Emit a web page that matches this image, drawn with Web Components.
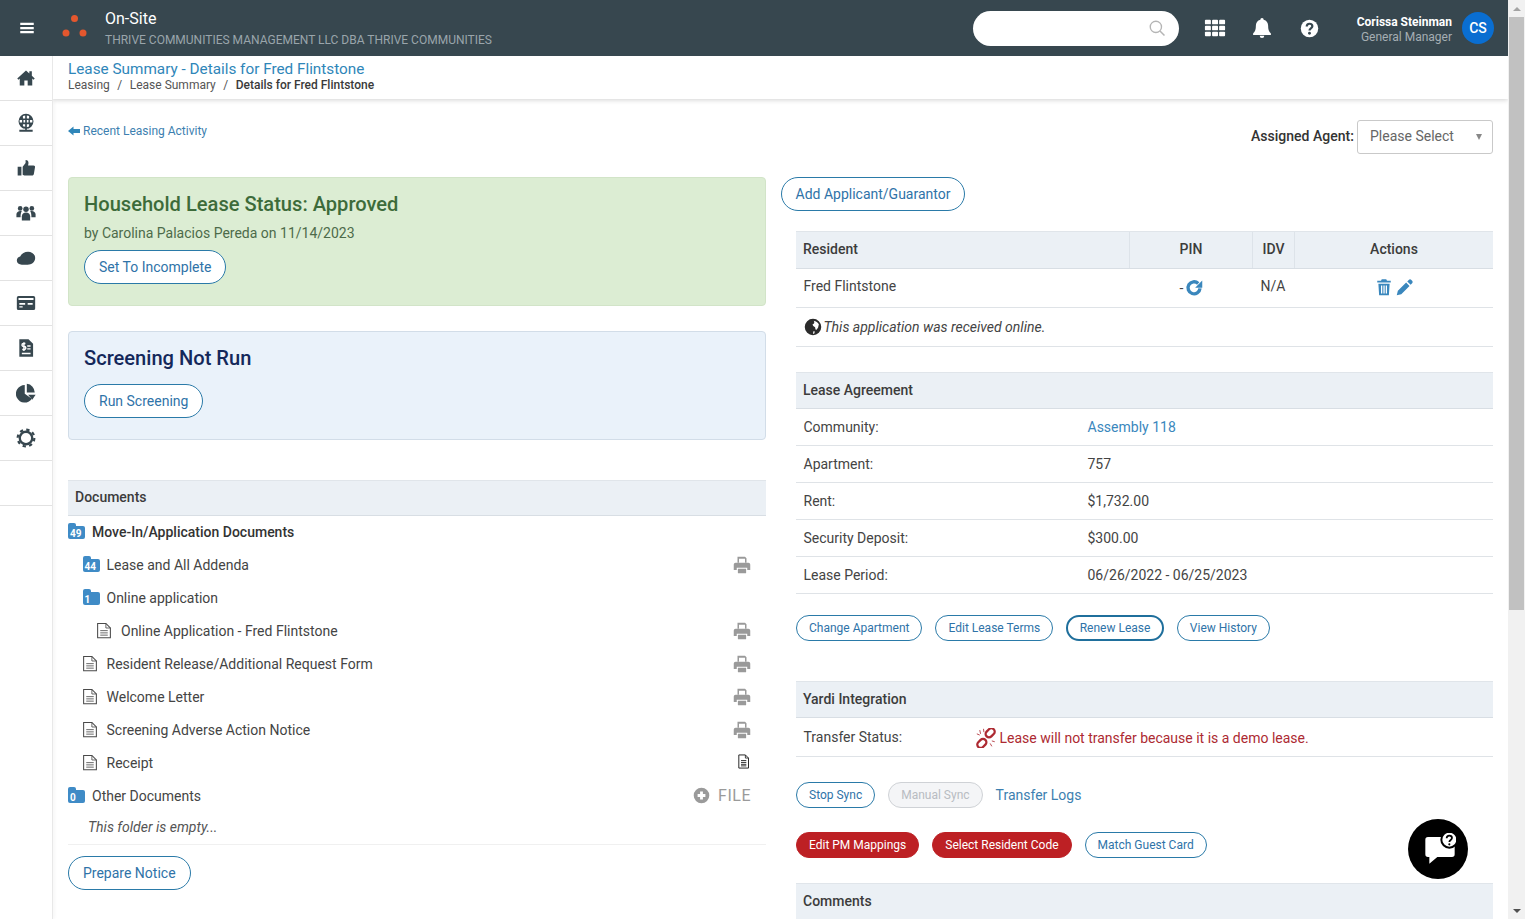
<!DOCTYPE html>
<html>
<head>
<meta charset="utf-8">
<title>Lease Summary</title>
<style>
html, body { margin: 0; height: 919px; overflow: hidden; background: #fff; }
body { font-family: Roboto, "Liberation Sans", sans-serif; font-size: 14px; color: #3c3c3c; }
</style>
</head>
<body>
<lease-app></lease-app>

<script>
var ICONS = {
  bars: '<path d="M3 5h18v3H3zM3 10.500h18v3H3zM3 16h18v3H3z"/>',
  home: '<path d="M12 3 1.500 12.500 3 14l1.500-1.300V21H10v-6h4v6h5.500v-8.300L21 14l1.500-1.500L19 9.300V4h-3v2.600z"/>',
  network: '<path fill-rule="evenodd" d="M12 1a9 9 0 1 0 0 18 9 9 0 0 0 0-18zM11 3v3.500H8.300V3.700zM13 3l2.700.7v2.800H13zM4.400 8.500h2.900v3H4.400zM9 8.500h2v3H9zM13 8.500h2v3h-2zM16.700 8.500h2.900v3h-2.900zM8.300 13.500H11v3l-2.700-.7zM13 13.500h2.700v2.800l-2.700.7z"/><path d="M11 18h2v2h7v2.500H4V20h7z"/>',
  thumb: '<path d="M2 10.500h4.500V21H2zM8 10.500 11.500 6V2.500c2.500 0 3.500 1.500 3.500 3.500l-.5 3H21c1.500 0 2 1 1.800 2.200l-1.300 7.600c-.2 1.300-1 2.200-2.300 2.200H11c-1.500 0-2-1-3-1z"/>',
  users: '<circle cx="12" cy="7.500" r="3.300"/><path d="M7 21v-5c0-2.800 2.200-4.500 5-4.500s5 1.700 5 4.500v5z"/><circle cx="5" cy="6.500" r="2.800"/><path d="M.5 17v-3.500c0-2.500 2.300-4 4.500-4 .9 0 1.500.1 2 .4-1.200 1.500-1.500 3.800-1.500 7.100z"/><circle cx="19" cy="6.500" r="2.800"/><path d="M23.500 17v-3.500c0-2.500-2.300-4-4.500-4-.9 0-1.500.1-2 .4 1.200 1.500 1.500 3.800 1.500 7.100z"/>',
  cloud: '<path d="M7 20c-3.500 0-6-2-6-5 0-2.500 1.800-4.300 4-4.800C6.500 7 10 4.500 14.500 4.500c4.500 0 8.500 3 8.500 7.500 0 5-4.500 8-9 8z"/>',
  card: '<path fill-rule="evenodd" d="M3 3.500h18a2 2 0 0 1 2 2v13a2 2 0 0 1-2 2H3a2 2 0 0 1-2-2v-13a2 2 0 0 1 2-2zM3 6v2.500h18V6zM4 12v2h7v-2zM14 12v2h6v-2zM4 16v1.500h4V16z"/>',
  invoice: '<path d="M4 1.500h11l5.500 5.500v15.500H4z"/><g fill="none" stroke="#fff" stroke-width="1.700"><path d="M11.300 6.500H9a1.700 1.700 0 0 0 0 3.600h1a1.700 1.700 0 0 1 0 3.600H7.500M9.500 5v10.500M13.500 9.500h4M13.500 13h4M7 18.500h10.500"/></g>',
  pie: '<path d="M10.500 2.500a10.500 10.500 0 1 0 8.500 16.500l-8.500-6z"/><path d="M13 1a10.500 10.500 0 0 1 9.500 10.500H13z"/><path d="M14.500 14h9l-4 6z"/>',
  gear: '<circle cx="12" cy="12" r="7.500" fill="none" stroke="currentColor" stroke-width="2.800"/><circle cx="12" cy="12" r="10" fill="none" stroke="currentColor" stroke-width="2.600" stroke-dasharray="4 3.850"/>',
  search: '<circle cx="10.500" cy="10.500" r="7.500" fill="none" stroke="currentColor" stroke-width="1.800"/><path d="m16 16 6 6" stroke="currentColor" stroke-width="2" fill="none"/>',
  grid: '<rect x="1" y="3" width="6.500" height="5" rx="1"/><rect x="8.800" y="3" width="6.500" height="5" rx="1"/><rect x="16.500" y="3" width="6.500" height="5" rx="1"/><rect x="1" y="9.500" width="6.500" height="5" rx="1"/><rect x="8.800" y="9.500" width="6.500" height="5" rx="1"/><rect x="16.500" y="9.500" width="6.500" height="5" rx="1"/><rect x="1" y="16" width="6.500" height="5" rx="1"/><rect x="8.800" y="16" width="6.500" height="5" rx="1"/><rect x="16.500" y="16" width="6.500" height="5" rx="1"/>',
  bell: '<path d="M12 1a1.800 1.800 0 0 0-1.800 1.900C7 3.700 5.300 6.300 5.300 9.500c0 5-1.300 6.500-3 8.500v1.500h19.400V18c-1.700-2-3-3.500-3-8.500 0-3.200-1.700-5.800-4.900-6.600A1.800 1.800 0 0 0 12 1zM9.500 20.500a2.500 2.500 0 0 0 5 0z"/>',
  help: '<circle cx="12" cy="12" r="11"/><path d="M8.500 9.500C8.500 7.300 10 6 12 6s3.600 1.200 3.600 3.200c0 2.700-3.600 2.700-3.600 5.300" fill="none" stroke="#37474f" stroke-width="2.800"/><circle cx="12" cy="18" r="1.800" fill="#37474f"/>',
  arrow: '<path d="M11 3v5h13v8H11v5L0 12z"/>',
  print: '<path d="M6 1h10l2 2v6h-2V3.500H8V9H6z"/><path fill-rule="evenodd" d="M3.500 9h17c1.400 0 2.500 1.100 2.500 2.500v7h-4v-3H5v3H1v-7C1 10.100 2.100 9 3.500 9z"/><path d="M6.500 17h11v6h-11z"/>',
  doc: '<path d="M3.500 2h11L20.500 8v13h-17z" fill="#fff" stroke="currentColor" stroke-width="1.400"/><path d="M14.500 2v6h6M7 11.500h10M7 14.500h10M7 17.500h10" fill="none" stroke="currentColor" stroke-width="1.100"/>',
  docdark: '<path d="M4.500 1.500h10.500l5 5V22.500H4.500z" fill="#fff" stroke="currentColor" stroke-width="1.600"/><path d="M15 1.500v5h5" fill="none" stroke="currentColor" stroke-width="1.400"/><path d="M8 10.500h8.500M8 13.500h8.500M8 16.500h8.500M8 19h8.500" fill="none" stroke="currentColor" stroke-width="1.500"/>',
  plus: '<path fill-rule="evenodd" d="M12 1a11 11 0 1 0 0 22 11 11 0 0 0 0-22zM10 6.500h4V10h3.500v4H14v3.500h-4V14H6.500v-4H10z"/>',
  refresh: '<path d="M20 12.500a8 8 0 1 1-2.400-6.500" fill="none" stroke="currentColor" stroke-width="4.500"/><path d="M23 2v9.500h-9.500z"/>',
  trash: '<path d="M9 1.500h6l1 2h5V6H3V3.500h5z"/><path fill-rule="evenodd" d="M4.500 7.500h15L18.500 23h-13zM8 10v10.500h1.700V10zM11.200 10v10.500h1.700V10zM14.300 10v10.500H16V10z"/>',
  pencil: '<path d="M17 2.500a2.500 2.500 0 0 1 3.500 0l1 1a2.500 2.500 0 0 1 0 3.500L19.500 9 15 4.500zM13.500 6 18 10.500 7 21.500 1 23l1.500-6z"/>',
  earth: '<path fill-rule="evenodd" d="M12 1a11 11 0 1 0 0 22 11 11 0 0 0 0-22zM13 3.500c3 .3 5.500 2.200 6.800 4.800l-1 4.500-2 3-1.500-.5-.5-3-2.500-1.500-1-2.300 2-1.200.5-2zM12.500 17.500l2 .5-1 3h-1.500z"/>',
  unlink: '<g fill="none" stroke="currentColor" stroke-width="2.800"><rect x="11" y="1.800" width="12" height="8" rx="4" transform="rotate(-45 17 5.800)"/><rect x="1" y="14.500" width="12" height="8" rx="4" transform="rotate(-45 7 18.500)"/></g><path d="M4.500 2.500 5.500 7M1 7l3.500 1.500M9 1l.5 4M19 15.500l3.500 1M17 18.500 19 22" stroke="currentColor" stroke-width="1" fill="none"/>',
  chat: '<path d="M3 5h18a2 2 0 0 1 2 2v11a2 2 0 0 1-2 2H10l-6 5v-5H3a2 2 0 0 1-2-2V7a2 2 0 0 1 2-2z" transform="translate(0 -2)"/><circle cx="19" cy="5" r="6" stroke="#000" stroke-width="1.500"/><path d="M17 4c0-1.200.9-2 2-2s2 .8 2 1.800c0 1.400-2 1.500-2 3" fill="none" stroke="#000" stroke-width="1.300"/><circle cx="19" cy="8.500" r=".8" fill="#000"/>'
};

class UiIcon extends HTMLElement
{
    connectedCallback()
    {
        var size = this.getAttribute("size") || 16;
        this.attachShadow({mode:"open"});
        this.shadowRoot.innerHTML = `
            <style>
                :host { display: inline-flex; line-height: 0; flex: none; }
                svg { fill: currentColor; }
            </style>
            <svg width="${size}" height="${size}" viewBox="0 0 24 24">${ICONS[this.getAttribute("name")]}</svg>`;
    }
}
customElements.define("ui-icon", UiIcon);

class PillButton extends HTMLElement
{
    connectedCallback()
    {
        this.attachShadow({mode:"open"});
        this.shadowRoot.innerHTML = `
            <style>
                :host
                {
                    display: inline-flex;
                    align-items: center;
                    box-sizing: border-box;
                    height: 34px;
                    padding: 0 14px;
                    font-size: 14px;
                    background: #fff;
                    color: #2f73a8;
                    border: 1px solid #2a7aa8;
                    border-radius: 17px;
                    white-space: nowrap;
                }
                :host([small]) { height: 26px; padding: 0 12px; font-size: 12px; border-radius: 13px; }
                :host([focus]) { border: 2px solid #1f6f9c; padding: 0 11.500px; }
                :host([danger]) { background: #bd2024; border-color: #bd2024; color: #fff; }
                :host([disabled]) { background: #f4f5f7; border: 1.500px solid #cfd2d6; color: #b8bcc2; }
            </style>
            <slot></slot>`;
    }
}
customElements.define("pill-button", PillButton);

class AlertBox extends HTMLElement
{
    connectedCallback()
    {
        this.attachShadow({mode:"open"});
        this.shadowRoot.innerHTML = `
            <style>
                :host
                {
                    display: block;
                    box-sizing: border-box;
                    padding: 14px 15px;
                    border-radius: 4px;
                    border: 1px solid #d2e4c8;
                    background: #dcedd3;
                    color: #3d6b3a;
                }
                :host([kind="info"]) { background: #eaf2fa; border-color: #d2dde8; color: #14285a; }
                h3 { margin: 0; font-size: 20.100px; line-height: 24px; font-weight: 500; }
                ::slotted(p) { margin: 7px 0 7px; line-height: 20px; font-size: 14px; color: #4d6b4a; }
            </style>
            <h3>${this.getAttribute("heading")}</h3>
            <slot></slot>`;
    }
}
customElements.define("alert-box", AlertBox);

class SectionHead extends HTMLElement
{
    connectedCallback()
    {
        this.attachShadow({mode:"open"});
        this.shadowRoot.innerHTML = `
            <style>
                :host
                {
                    display: flex;
                    align-items: center;
                    box-sizing: border-box;
                    height: 37px;
                    padding: 0 7px 2px 7px;
                    background: #ebf0f5;
                    border-top: 1px solid #e0e5ea;
                    border-bottom: 1px solid #d8dee4;
                    font-weight: 500;
                    color: #3c3c3c;
                }
            </style>
            <slot></slot>`;
    }
}
customElements.define("section-head", SectionHead);

class KvRow extends HTMLElement
{
    connectedCallback()
    {
        var col = this.getAttribute("col") || 284;
        this.attachShadow({mode:"open"});
        this.shadowRoot.innerHTML = `
            <style>
                :host
                {
                    display: grid;
                    grid-template-columns: ${col}px 1fr;
                    align-items: center;
                    height: 37px;
                    padding-left: 7.500px;
                    border-bottom: 1px solid #dfe3e7;
                    box-sizing: border-box;
                    color: #444;
                }
                :host([lift]) span:first-child { padding-bottom: 5px; }
            </style>
            <span>${this.getAttribute("label")}</span>
            <span><slot></slot></span>`;
    }
}
customElements.define("kv-row", KvRow);

class ResidentTable extends HTMLElement
{
    connectedCallback()
    {
        this.attachShadow({mode:"open"});
        this.shadowRoot.innerHTML = `
            <style>
                :host { display: block; color: #444; }
                .row { display: grid; grid-template-columns: 334px 123px 42px 198px; box-sizing: border-box; }
                .head { height: 38px; padding-bottom: 0; background: #ebf0f5; border-top: 1px solid #e0e5ea; border-bottom: 1px solid #d8dee4; font-weight: 500; color: #3c3c3c; }
                .head > div { display: flex; align-items: center; justify-content: center; border-right: 1px solid #dde3e9; padding-bottom: 2px; }
                .head > div:first-child { justify-content: flex-start; padding-left: 7px; }
                .head > div:last-child { border-right: none; }
                .body { height: 39px; border-bottom: 1px solid #dfe3e7; }
                .body > div { display: flex; align-items: center; justify-content: center; gap: 2px; }
                .body > div:first-child { justify-content: flex-start; padding-left: 7.500px; padding-bottom: 5px; }
                .link { color: #3a87bd; }
                .note { display: flex; align-items: center; gap: 2px; height: 39px; padding-left: 7.500px; border-bottom: 1px solid #dfe3e7; font-style: italic; box-sizing: border-box; }
            </style>
            <div class="row head"><div>Resident</div><div>PIN</div><div>IDV</div><div>Actions</div></div>
            <div class="row body">
                <div>Fred Flintstone</div>
                <div>-<ui-icon class="link" name="refresh" size="18"></ui-icon></div>
                <div style="padding-bottom:5px;padding-right:2px">N/A</div>
                <div style="gap:3px;padding-bottom:2px"><ui-icon class="link" name="trash" size="18"></ui-icon><ui-icon class="link" name="pencil" size="18"></ui-icon></div>
            </div>
            <div class="note"><ui-icon name="earth" size="18" style="color:#2b2b2b"></ui-icon>This application was received online.</div>`;
    }
}
customElements.define("resident-table", ResidentTable);

class DocRow extends HTMLElement
{
    connectedCallback()
    {
        var level = +this.getAttribute("level") || 0;
        var count = this.getAttribute("folder");
        var left = count !== null
            ? `<span class="folder"><span class="tab"></span><span class="num">${count}</span></span>`
            : `<ui-icon name="doc" size="18" style="color:#4a4a4a;margin:0 1px 0 -2px"></ui-icon>`;
        var right = "";
        if (this.hasAttribute("print")) right = `<ui-icon name="print" size="18" style="color:#9a9a9a"></ui-icon>`;
        if (this.hasAttribute("viewdoc")) right = `<ui-icon name="docdark" size="15" style="color:#2b2b2b;margin:-3px 0 0 0"></ui-icon>`;
        this.attachShadow({mode:"open"});
        this.shadowRoot.innerHTML = `
            <style>
                :host
                {
                    display: flex;
                    align-items: center;
                    height: 33px;
                    padding-left: ${level * 14.500}px;
                    padding-right: 15px;
                    color: #444;
                }
                :host([strong]) { font-weight: 500; color: #333; }
                .folder
                {
                    position: relative;
                    flex: none;
                    width: 17px;
                    height: 13px;
                    margin-top: 2px;
                    background: #3f8bc6;
                    border-radius: 1px 2px 2px 2px;
                    color: #fff;
                    font-size: 10px;
                    font-weight: 700;
                }
                .tab { position: absolute; left: 0; top: -3px; width: 8px; height: 4px; background: #3f8bc6; border-radius: 2px 2px 0 0; }
                .num { position: absolute; left: 2px; top: 3px; line-height: 10px; }
                .label { margin-left: 7px; flex: 1; }
            </style>
            ${left}
            <span class="label"><slot></slot></span>
            ${right}<slot name="action"></slot>`;
    }
}
customElements.define("doc-row", DocRow);

class AppTopbar extends HTMLElement
{
    connectedCallback()
    {
        this.attachShadow({mode:"open"});
        this.shadowRoot.innerHTML = `
            <style>
                :host
                {
                    display: flex;
                    align-items: center;
                    height: 56px;
                    background: #37474f;
                    color: #fff;
                    flex: none;
                }
                .burger { width: 53px; display: flex; justify-content: center; }
                .logo { margin-left: 7px; width: 30px; line-height: 0; }
                .brand { margin-left: 15px; flex: 1; }
                .brand b { display: block; font-weight: 400; font-size: 16px; line-height: 20px; margin-bottom: 3px; margin-top: 1px; }
                .brand span { display: block; font-size: 12px; line-height: 16px; color: #9aa5ab; }
                .search
                {
                    display: flex; align-items: center; justify-content: flex-end;
                    box-sizing: border-box;
                    width: 206px; height: 35px; margin-right: 25px; padding-right: 13px;
                    background: #fff; border-radius: 18px; color: #b5b5b5;
                }
                .tools { display: flex; align-items: center; gap: 25px; }
                .tools .help { margin-left: 2px; }
                .user { margin-left: 38px; padding-top: 4px; text-align: right; font-size: 12px; line-height: 15px; }
                .user b { display: block; font-weight: 700; }
                .user span { color: #a5aeb3; }
                .avatar
                {
                    display: flex; align-items: center; justify-content: center;
                    width: 32px; height: 32px; margin: 0 14px 0 10px;
                    background: #0a6ed1; border-radius: 50%;
                    font-size: 14px; font-weight: 500;
                }
            </style>
            <div class="burger"><ui-icon name="bars" size="18"></ui-icon></div>
            <div class="logo">
                <svg width="30" height="30" viewBox="0 0 30 30" fill="#e4572e">
                    <circle cx="14.500" cy="5.500" r="3.500"/><circle cx="6" cy="20" r="3.500"/><circle cx="23" cy="20" r="3.500"/>
                </svg>
            </div>
            <div class="brand"><b>On-Site</b><span>THRIVE COMMUNITIES MANAGEMENT LLC DBA THRIVE COMMUNITIES</span></div>
            <div class="search"><ui-icon name="search" size="18"></ui-icon></div>
            <div class="tools">
                <ui-icon name="grid" size="22"></ui-icon>
                <ui-icon name="bell" size="22"></ui-icon>
                <ui-icon class="help" name="help" size="19"></ui-icon>
            </div>
            <div class="user"><b>Corissa Steinman</b><span>General Manager</span></div>
            <div class="avatar">CS</div>`;
    }
}
customElements.define("app-topbar", AppTopbar);

class AppSidebar extends HTMLElement
{
    connectedCallback()
    {
        var names = ["home","network","thumb","users","cloud","card","invoice","pie","gear",""];
        this.attachShadow({mode:"open"});
        this.shadowRoot.innerHTML = `
            <style>
                :host
                {
                    display: block;
                    width: 53px;
                    flex: none;
                    box-sizing: border-box;
                    background: #fff;
                    border-right: 1px solid #e8e8e8;
                    box-shadow: 2px 0 3px rgba(0,0,0,.03);
                    color: #37474f;
                }
                div
                {
                    display: flex; align-items: center; justify-content: center;
                    box-sizing: border-box;
                    height: 45px;
                    padding-bottom: 1px;
                    border-bottom: 1px solid #e2e2e2;
                }
            </style>
            ${names.map(n => `<div>${n ? `<ui-icon name="${n}" size="20"></ui-icon>` : ""}</div>`).join("")}`;
    }
}
customElements.define("app-sidebar", AppSidebar);

class PageHeader extends HTMLElement
{
    connectedCallback()
    {
        this.attachShadow({mode:"open"});
        this.shadowRoot.innerHTML = `
            <style>
                :host
                {
                    display: block;
                    box-sizing: border-box;
                    height: 43px;
                    padding: 5px 16px 0 15px;
                    background: #fff;
                    box-shadow: 0 1px 5px rgba(0,0,0,.18);
                    position: relative;
                }
                h1 { margin: -1px 0 1px; font-size: 15.300px; font-weight: 400; line-height: 18px; color: #2f86b9; }
                nav { font-size: 12px; line-height: 13px; color: #555; }
                i { font-style: normal; margin: 0 4.500px; }
                b { font-weight: 500; color: #3a3a3a; }
            </style>
            <h1>Lease Summary - Details for Fred Flintstone</h1>
            <nav>Leasing <i>/</i> Lease Summary <i>/</i> <b>Details for Fred Flintstone</b></nav>`;
    }
}
customElements.define("page-header", PageHeader);

class AppScrollbar extends HTMLElement
{
    connectedCallback()
    {
        this.attachShadow({mode:"open"});
        this.shadowRoot.innerHTML = `
            <style>
                :host { display: flex; flex-direction: column; width: 17px; flex: none; background: #f1f1f1; }
                .btn { height: 17px; display: flex; align-items: center; justify-content: center; }
                .up { width: 0; height: 0; border: 4px solid transparent; border-top: 0; border-bottom: 4px solid #a3a3a3; }
                .down { width: 0; height: 0; border: 4px solid transparent; border-bottom: 0; border-top: 4px solid #505050; }
                .track { flex: 1; padding: 0 1px; }
                .thumb { height: 593px; background: #c1c1c1; }
            </style>
            <div class="btn"><div class="up"></div></div>
            <div class="track"><div class="thumb"></div></div>
            <div class="btn"><div class="down"></div></div>`;
    }
}
customElements.define("app-scrollbar", AppScrollbar);

class LeaseApp extends HTMLElement
{
    connectedCallback()
    {
        this.attachShadow({mode:"open"});
        this.shadowRoot.innerHTML = `
            <style>
                :host { display: flex; height: 919px; overflow: hidden; position: relative; }
                .app { flex: 1; min-width: 0; display: flex; flex-direction: column; }
                .under { flex: 1; display: flex; min-height: 0; }
                .main { flex: 1; min-width: 0; overflow: hidden; }
                .content { padding: 21px 15px 0 15px; }
                .toolbar { display: flex; justify-content: space-between; align-items: center; height: 34px; margin-bottom: 23px; }
                .back { display: flex; align-items: center; gap: 3px; font-size: 12px; color: #3d7fb0; margin-top: -13px; }
                .back ui-icon { color: #2f86b9; }
                .agent { display: flex; align-items: center; gap: 3px; font-weight: 500; color: #333; }
                .select
                {
                    display: flex; align-items: center; justify-content: space-between;
                    box-sizing: border-box;
                    width: 136px; height: 34px; padding: 0 10px 2px 12px;
                    border: 1px solid #c9c9c9; border-radius: 3px;
                    font-weight: 400; color: #666;
                }
                .agent > span { padding-bottom: 2px; letter-spacing: .02px; }
                .caret { width: 0; height: 0; border: 3.500px solid transparent; border-bottom: 0; border-top: 6px solid #888; margin-top: 2px; }
                .cols { display: grid; grid-template-columns: 698px 712px; column-gap: 15px; }
                .green { height: 129px; margin-bottom: 25px; }
                .blue { height: 109px; margin-bottom: 40px; }
                .blue pill-button { margin-top: 14px; }
                .docs { height: 36px; margin-bottom: -1px; }
                .file { display: flex; align-items: center; gap: 8px; font-size: 16px; color: #9a9a9a; letter-spacing: .5px; }
                .empty { height: 33px; line-height: 30px; padding-left: 20px; font-style: italic; color: #555; border-bottom: 1px solid #f0f0f0; margin-bottom: 11px; box-sizing: border-box; }
                .right > .tables { margin: 20px 0 0 15px; }
                .gap { height: 25px; }
                .btns { display: flex; gap: 13px; align-items: center; }
                .add { padding: 0 13.500px; }
                .link { color: #3a87bd; }
                .red { display: flex; align-items: center; gap: 4px; color: #ad2a32; padding-top: 2px; }
            </style>
            <div class="app">
                <app-topbar></app-topbar>
                <div class="under">
                    <app-sidebar></app-sidebar>
                    <div class="main">
                        <page-header></page-header>
                        <div class="content">
                            <div class="toolbar">
                                <div class="back"><ui-icon name="arrow" size="12"></ui-icon>Recent Leasing Activity</div>
                                <div class="agent"><span>Assigned Agent:</span>
                                    <div class="select">Please Select<span class="caret"></span></div>
                                </div>
                            </div>
                            <div class="cols">
                                <div class="left">
                                    <alert-box class="green" heading="Household Lease Status: Approved">
                                        <p>by Carolina Palacios Pereda on 11/14/2023</p>
                                        <pill-button>Set To Incomplete</pill-button>
                                    </alert-box>
                                    <alert-box class="blue" kind="info" heading="Screening Not Run">
                                        <pill-button>Run Screening</pill-button>
                                    </alert-box>
                                    <section-head class="docs">Documents</section-head>
                                    <doc-row strong folder="49">Move-In/Application Documents</doc-row>
                                    <doc-row level="1" folder="44" print>Lease and All Addenda</doc-row>
                                    <doc-row level="1" folder="1">Online application</doc-row>
                                    <doc-row level="2" print>Online Application - Fred Flintstone</doc-row>
                                    <doc-row level="1" print>Resident Release/Additional Request Form</doc-row>
                                    <doc-row level="1" print>Welcome Letter</doc-row>
                                    <doc-row level="1" print>Screening Adverse Action Notice</doc-row>
                                    <doc-row level="1" viewdoc>Receipt</doc-row>
                                    <doc-row folder="0">Other Documents
                                        <span slot="action" class="file"><ui-icon name="plus" size="17"></ui-icon>FILE</span>
                                    </doc-row>
                                    <div class="empty">This folder is empty...</div>
                                    <pill-button>Prepare Notice</pill-button>
                                </div>
                                <div class="right">
                                    <pill-button class="add">Add Applicant/Guarantor</pill-button>
                                    <div class="tables">
                                        <resident-table></resident-table>
                                        <div class="gap"></div>
                                        <section-head>Lease Agreement</section-head>
                                        <kv-row label="Community:"><span class="link">Assembly 118</span></kv-row>
                                        <kv-row label="Apartment:">757</kv-row>
                                        <kv-row label="Rent:">$1,732.00</kv-row>
                                        <kv-row label="Security Deposit:">$300.00</kv-row>
                                        <kv-row label="Lease Period:">06/26/2022 - 06/25/2023</kv-row>
                                        <div class="btns" style="margin-top:21px">
                                            <pill-button small>Change Apartment</pill-button>
                                            <pill-button small>Edit Lease Terms</pill-button>
                                            <pill-button small focus>Renew Lease</pill-button>
                                            <pill-button small>View History</pill-button>
                                        </div>
                                        <div style="height:40px"></div>
                                        <section-head>Yardi Integration</section-head>
                                        <kv-row lift label="Transfer Status:" col="172" style="height:39px"><span class="red"><ui-icon name="unlink" size="20"></ui-icon>Lease will not transfer because it is a demo lease.</span></kv-row>
                                        <div class="btns" style="margin-top:25px">
                                            <pill-button small>Stop Sync</pill-button>
                                            <pill-button small disabled>Manual Sync</pill-button>
                                            <span class="link" style="color:#3d7fb0">Transfer Logs</span>
                                        </div>
                                        <div class="btns" style="margin-top:24px">
                                            <pill-button small danger>Edit PM Mappings</pill-button>
                                            <pill-button small danger>Select Resident Code</pill-button>
                                            <pill-button small>Match Guest Card</pill-button>
                                        </div>
                                        <div style="height:25px"></div>
                                        <section-head>Comments</section-head>
                                    </div>
                                </div>
                            </div>
                        </div>
                    </div>
                </div>
            </div>
            <app-scrollbar></app-scrollbar>
            <chat-bubble></chat-bubble>`;
    }
}

class ChatBubble extends HTMLElement
{
    connectedCallback()
    {
        this.attachShadow({mode:"open"});
        this.shadowRoot.innerHTML = `
            <style>
                :host
                {
                    position: absolute;
                    left: 1408px;
                    top: 819px;
                    width: 60px;
                    height: 60px;
                    display: flex; align-items: center; justify-content: center;
                    background: #000;
                    border-radius: 50%;
                    color: #fff;
                }
                ui-icon { margin-left: 3px; }
            </style>
            <ui-icon name="chat" size="32"></ui-icon>`;
    }
}
customElements.define("chat-bubble", ChatBubble);
customElements.define("lease-app", LeaseApp);
</script>
</body>
</html>
